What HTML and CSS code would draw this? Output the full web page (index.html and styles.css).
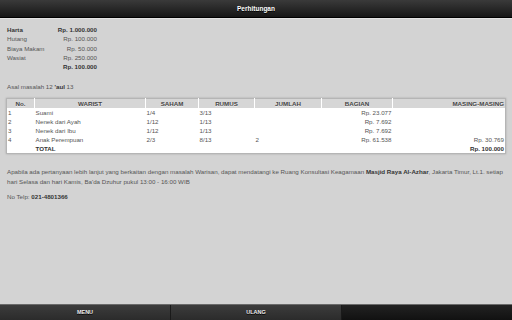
FILE: index.html
```html
<!DOCTYPE html>
<html lang="id">
<head>
    <meta charset="utf-8">
    <title>Perhitungan</title>
    <link rel="stylesheet" href="styles.css">
</head>
<body>
    <div class="page">
        <div class="header">Perhitungan</div>

        <div class="content">
            <div class="harta">
                <span class="lbl strong">Harta</span><span class="val strong">Rp. 1.000.000</span>
                <span class="lbl">Hutang</span><span class="val">Rp. 100.000</span>
                <span class="lbl">Biaya Makam</span><span class="val">Rp. 50.000</span>
                <span class="lbl">Wasiat</span><span class="val">Rp. 250.000</span>
                <span class="lbl"></span><span class="val strong">Rp. 100.000</span>
            </div>

            <p class="asal">Asal masalah 12 <b>'aul</b> 13</p>

            <table class="hasil">
                <thead>
                    <tr>
                        <th class="c-no">No.</th>
                        <th class="c-warist">WARIST</th>
                        <th class="c-saham">SAHAM</th>
                        <th class="c-rumus">RUMUS</th>
                        <th class="c-jumlah">JUMLAH</th>
                        <th class="c-bagian">BAGIAN</th>
                        <th class="c-masing">MASING-MASING</th>
                    </tr>
                </thead>
                <tbody>
                    <tr>
                        <td>1</td><td>Suami</td><td>1/4</td><td>3/13</td><td></td>
                        <td class="r">Rp. 23.077</td><td></td>
                    </tr>
                    <tr>
                        <td>2</td><td>Nenek dari Ayah</td><td>1/12</td><td>1/13</td><td></td>
                        <td class="r">Rp. 7.692</td><td></td>
                    </tr>
                    <tr>
                        <td>3</td><td>Nenek dari Ibu</td><td>1/12</td><td>1/13</td><td></td>
                        <td class="r">Rp. 7.692</td><td></td>
                    </tr>
                    <tr>
                        <td>4</td><td>Anak Perempuan</td><td>2/3</td><td>8/13</td><td>2</td>
                        <td class="r">Rp. 61.538</td><td class="r">Rp. 30.769</td>
                    </tr>
                    <tr class="total">
                        <td></td><td>TOTAL</td><td></td><td></td><td></td><td></td>
                        <td class="r">Rp. 100.000</td>
                    </tr>
                </tbody>
            </table>

            <p class="info">Apabila ada pertanyaan lebih lanjut yang berkaitan dengan masalah Warisan, dapat mendatangi ke Ruang Konsultasi Keagamaan <b>Masjid Raya Al-Azhar</b>, Jakarta Timur, Lt.1. setiap hari Selasa dan hari Kamis, Ba'da Dzuhur pukul 13:00 - 16:00 WIB</p>

            <p class="telp">No Telp: <b>021-4801366</b></p>
        </div>

        <div class="footer">
            <div class="btn">MENU</div>
            <div class="btn">ULANG</div>
        </div>
    </div>
</body>
</html>
```

FILE: styles.css
```css
html, body {
    margin: 0;
    padding: 0;
    height: 100%;
}
body {
    font-family: "Liberation Sans", Arial, sans-serif;
    font-size: 6.2px;
    color: #555;
    background: #d3d3d3;
}
.page {
    display: flex;
    flex-direction: column;
    height: 320px;
}
.header {
    height: 17px;
    line-height: 17px;
    text-align: center;
    font-weight: bold;
    color: #fff;
    text-shadow: 0 1px 0 #000;
    background: linear-gradient(#3a3a3a, #161616);
    border-bottom: 1px solid #000;
    font-size: 6.5px;
}
.content {
    flex: 1;
    padding: 6px 6px 0 7px;
    border-top: 1px solid #e2e2e2;
}
.harta {
    display: grid;
    grid-template-columns: 48px 42px;
    line-height: 9.3px;
    white-space: nowrap;
}
.harta .val {
    text-align: right;
}
.strong {
    font-weight: bold;
    color: #333;
}
.asal {
    margin: 11px 0 7px;
    line-height: 9px;
}
.asal b {
    color: #333;
}
.hasil {
    width: 500px;
    margin-left: -1px;
    border-collapse: collapse;
    background: #fff;
    border: 1px solid #b5b5b5;
    box-shadow: 0 0 2px rgba(0, 0, 0, 0.2);
    line-height: 8px;
}
.hasil th {
    background: #d6d6d6;
    color: #444;
    font-weight: bold;
    border-left: 1px solid #fff;
    padding: 0 1px;
    height: 9px;
    text-shadow: 0 1px 0 #eee;
}
.hasil th:first-child {
    border-left: 0;
}
.hasil td {
    padding: 0 1px;
    height: 9px;
    vertical-align: middle;
}
.hasil .r {
    text-align: right;
}
.c-no { width: 25px; }
.c-warist { width: 108px; }
.c-saham { width: 50px; }
.c-rumus { width: 53px; }
.c-jumlah { width: 64px; }
.c-bagian { width: 68px; }
.hasil th.c-masing {
    text-align: right;
}
.total td {
    font-weight: bold;
    color: #333;
}
.info {
    margin: 13px 0 0;
    line-height: 9.5px;
}
.info b, .telp b {
    color: #333;
}
.telp {
    margin: 6px 0 0;
    line-height: 9.5px;
}
.footer {
    display: flex;
    height: 15px;
    background: linear-gradient(#222, #111);
    border-top: 1px solid #6a6a6a;
}
.btn {
    width: 170px;
    line-height: 15px;
    text-align: center;
    color: #eee;
    font-weight: bold;
    font-size: 5.5px;
    text-shadow: 0 1px 0 #000;
    background: linear-gradient(#3c3c3c, #2b2b2b);
    border-right: 1px solid #1a1a1a;
}
```
